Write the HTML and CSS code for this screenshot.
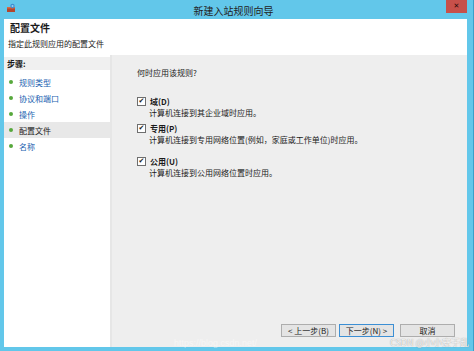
FILE: index.html
```html
<!DOCTYPE html>
<html lang="zh-CN">
<head>
  <meta charset="UTF-8" />
  <title>新建入站规则向导</title>
  <link rel="stylesheet" href="styles.css">
</head>
<body>
  <div class="window">
    <div class="titlebar">
      <svg class="app-icon" width="10" height="10" viewBox="0 0 10 10">
        <rect x="1" y="4" width="8" height="5" fill="#b3462e"/>
        <rect x="1" y="4" width="8" height="1.5" fill="#d86a44"/>
        <circle cx="6.5" cy="3" r="2.2" fill="#3f8fd0"/>
        <circle cx="6.5" cy="3" r="1" fill="#9fd3f5"/>
      </svg>
      <span class="title">新建入站规则向导</span>
      <button class="close">✕</button>
    </div>

    <div class="header">
      <h1>配置文件</h1>
      <p>指定此规则应用的配置文件</p>
    </div>

    <div class="body">
      <div class="steps">
        <div class="steps-head">步骤:</div>
        <div class="step link"><span class="dot"></span>规则类型</div>
        <div class="step link"><span class="dot"></span>协议和端口</div>
        <div class="step link"><span class="dot"></span>操作</div>
        <div class="step current"><span class="dot"></span>配置文件</div>
        <div class="step link"><span class="dot"></span>名称</div>
      </div>

      <div class="main">
        <p class="question">何时应用该规则?</p>

        <div class="option first">
          <div class="check-row"><span class="box">✔</span><b>域(D)</b></div>
          <div class="desc">计算机连接到其企业域时应用。</div>
        </div>
        <div class="option">
          <div class="check-row"><span class="box">✔</span><b>专用(P)</b></div>
          <div class="desc">计算机连接到专用网络位置(例如，家庭或工作单位)时应用。</div>
        </div>
        <div class="option third">
          <div class="check-row"><span class="box">✔</span><b>公用(U)</b></div>
          <div class="desc">计算机连接到公用网络位置时应用。</div>
        </div>

        <div class="buttons">
          <button class="btn">&lt; 上一步(B)</button>
          <button class="btn default">下一步(N) &gt;</button>
          <button class="btn cancel">取消</button>
        </div>
        <div class="url-mark">https://blog.csdn.net/</div>
      </div>
    </div>
  </div>
  <div class="watermark">CSDN @小小安于乱</div>
</body>
</html>
```

FILE: styles.css
```css
* { margin: 0; padding: 0; box-sizing: border-box; }

body {
  width: 474px;
  height: 351px;
  overflow: hidden;
  font-family: "Noto Sans CJK SC", "Liberation Sans", sans-serif;
  color: #1a1a1a;
  background: #5fc6e9;
  position: relative;
}

.window {
  height: 351px;
  display: flex;
  flex-direction: column;
  padding: 0 6px 4px 4px;
  background: #62c7ea;
  border-right: 1px solid #3a9fc8;
}

.titlebar {
  height: 19px;
  display: flex;
  align-items: center;
  position: relative;
}

.app-icon {
  margin-left: 2px;
  margin-top: -4px;
}

.title {
  position: absolute;
  left: 0;
  right: 0;
  text-align: center;
  top: 3px;
  font-size: 10px;
  color: #222;
  margin-left: -4px;
}

.close {
  position: absolute;
  right: 0;
  top: 0;
  width: 21px;
  height: 13px;
  border: none;
  background: #c7504a;
  color: #2a0a08;
  font-size: 7px;
  font-weight: bold;
  line-height: 13px;
  font-family: "DejaVu Sans", sans-serif;
}

.header {
  background: #fff;
  height: 36px;
  padding: 1px 0 0 6px;
}

.header h1 {
  font-size: 10px;
  font-weight: bold;
  line-height: 14px;
  margin-top: 1px;
}

.header p {
  font-size: 8px;
  line-height: 12px;
  margin-top: 3px;
  margin-left: -2px;
}

.body {
  flex: 1;
  display: flex;
}

.steps {
  width: 108px;
  background: #fff;
  border-right: 2px solid #e6e6e6;
  padding-top: 2px;
}

.steps-head {
  height: 13px;
  background: #f0f0f0;
  font-size: 8px;
  font-weight: bold;
  line-height: 13px;
  padding-left: 3px;
  margin-bottom: 4px;
}

.step {
  height: 16px;
  display: flex;
  align-items: center;
  font-size: 8px;
  padding-left: 5px;
}

.step.link { color: #1a5fb0; }

.step.current {
  background: #e8e8e8;
  color: #1a1a1a;
  width: 106px;
}

.dot {
  width: 4px;
  height: 4px;
  border-radius: 50%;
  background: #57a83c;
  margin-right: 6px;
}

.main {
  flex: 1;
  background: #eeeeee;
  padding: 12px 0 0 25px;
  display: flex;
  flex-direction: column;
  position: relative;
}

.question {
  font-size: 8px;
  line-height: 12px;
}

.option { margin-top: 3px; }
.option.first { margin-top: 16px; }
.option.third { margin-top: 9px; }

.check-row {
  display: flex;
  align-items: center;
  height: 12px;
  font-size: 8px;
}

.check-row b { font-weight: bold; }

.box {
  width: 9px;
  height: 9px;
  border: 1px solid #6e6e6e;
  background: #fff;
  font-size: 7px;
  line-height: 7px;
  text-align: center;
  color: #222;
  margin-right: 4px;
  font-family: "DejaVu Sans", sans-serif;
}

.desc {
  font-size: 8px;
  line-height: 12px;
  padding-left: 12px;
  white-space: nowrap;
}

.buttons {
  margin-top: auto;
  margin-bottom: 10px;
  display: flex;
  gap: 3px;
  padding-left: 144px;
}

.btn {
  height: 13px;
  width: 55px;
  font-family: "Noto Sans CJK SC", sans-serif;
  font-size: 8px;
  line-height: 11px;
  background: #e4e4e4;
  border: 1px solid #adadad;
  color: #1a1a1a;
}

.btn.default { border-color: #3c8fd4; }
.btn.cancel { margin-left: 3px; }

.url-mark {
  position: absolute;
  left: 62px;
  bottom: -1px;
  font-size: 9px;
  line-height: 10px;
  color: rgba(255, 255, 255, 0.5);
  font-family: "Liberation Sans", sans-serif;
}

.watermark {
  position: absolute;
  right: 5px;
  bottom: 4px;
  font-size: 9px;
  line-height: 9px;
  color: rgba(250, 250, 250, 0.95);
  text-shadow: 0 0 1px rgba(90, 90, 90, 0.7);
}
```
